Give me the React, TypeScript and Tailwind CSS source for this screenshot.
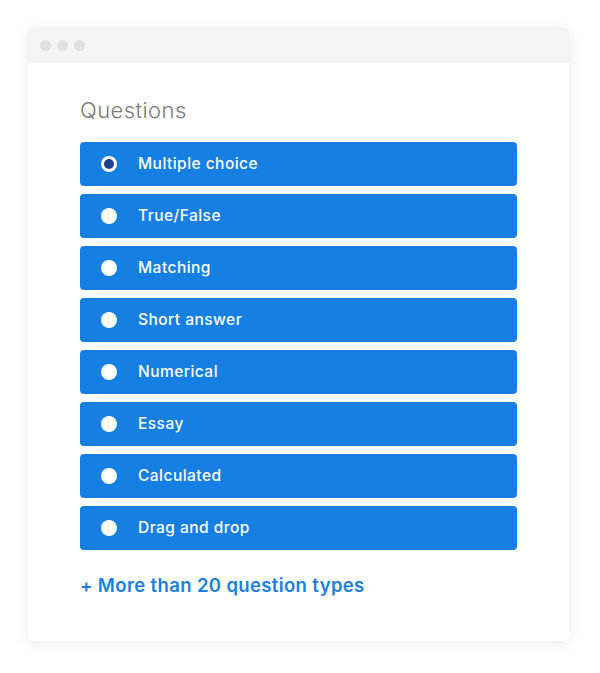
const types = [
  "Multiple choice",
  "True/False",
  "Matching",
  "Short answer",
  "Numerical",
  "Essay",
  "Calculated",
  "Drag and drop",
];

export default function App() {
  return (
    <div className="h-[673px] w-[600px] bg-white pl-[28px] pt-[28px]" style={{ fontFamily: "Inter, 'Open Sans', sans-serif" }}>
      <div className="w-[541px] h-[613px] overflow-hidden rounded-[5px] bg-white shadow-[0_2px_14px_rgba(0,0,0,0.09)]">
        <div className="flex h-[35px] items-center gap-[6px] bg-[#f4f4f4] pl-[12px]">
          <span className="h-[11px] w-[11px] rounded-full bg-[#e1e1e1]" />
          <span className="h-[11px] w-[11px] rounded-full bg-[#e1e1e1]" />
          <span className="h-[11px] w-[11px] rounded-full bg-[#e1e1e1]" />
        </div>
        <div className="px-[52px] pt-[33px]">
          <h2 className="text-[22px] font-light leading-[28px] tracking-[0.02em] text-[#7a7a7a]">Questions</h2>
          <div className="mt-[18px] flex w-[437px] flex-col gap-[8px]">
            {types.map((t, i) => (
              <div key={t} className="flex h-[44px] items-center rounded-[4px] bg-[#167fe4] pl-[21px]">
                {i === 0 ? (
                  <span className="flex h-[16px] w-[16px] items-center justify-center rounded-full bg-white">
                    <span className="h-[10px] w-[10px] rounded-full bg-[#213f8f]" />
                  </span>
                ) : (
                  <span className="h-[16px] w-[16px] rounded-full bg-white" />
                )}
                <span className="ml-[21px] text-[15.5px] font-medium tracking-[0.03em] text-white">{t}</span>
              </div>
            ))}
          </div>
          <div className="mt-[22px] text-[18.5px] font-semibold tracking-[0.02em] text-[#1a7fe0]">+ More than 20 question types</div>
        </div>
      </div>
    </div>
  );
}
